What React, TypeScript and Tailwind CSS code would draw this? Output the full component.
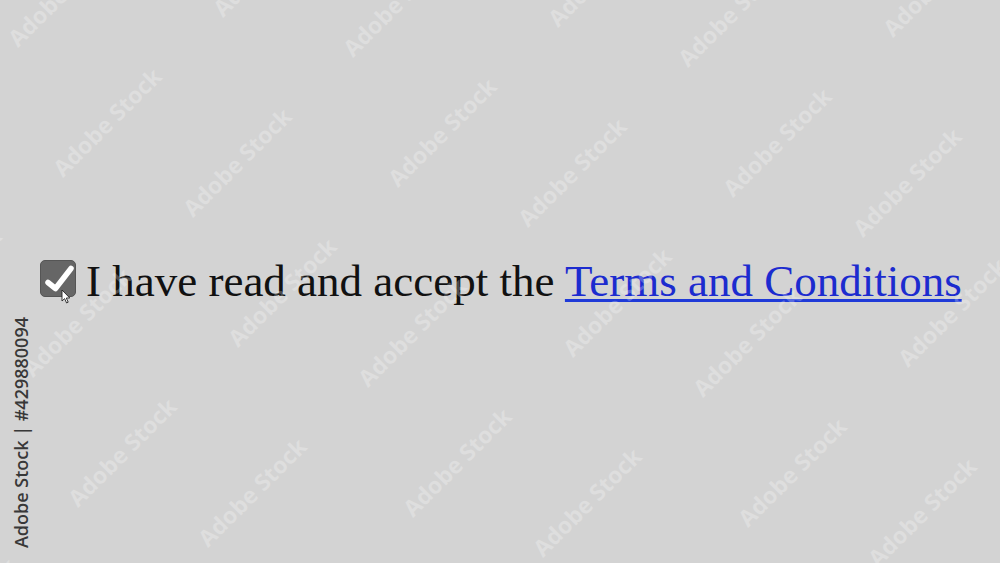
import React from "react";

function Watermarks() {
  const items: { x: number; y: number }[] = [];
  const base = { x: 107, y: 122 };
  for (let i = -3; i <= 4; i++) {
    for (let j = -2; j <= 4; j++) {
      for (const off of [
        { x: 0, y: 0 },
        { x: 130, y: 40 },
      ]) {
        const x = base.x + i * 335 + j * 175 + off.x;
        const y = base.y + i * 10 + j * 170 + off.y;
        if (x > -120 && x < 1120 && y > -120 && y < 680) items.push({ x, y });
      }
    }
  }
  return (
    <div className="pointer-events-none absolute inset-0 overflow-hidden">
      {items.map((p, k) => (
        <span
          key={k}
          className="absolute whitespace-nowrap text-[23px] font-bold text-white/25 [font-family:'Open_Sans',sans-serif]"
          style={{
            left: p.x,
            top: p.y,
            transform: "translate(-50%, -50%) rotate(-45deg)",
          }}
        >
          Adobe Stock
        </span>
      ))}
    </div>
  );
}

export default function App() {
  return (
    <div className="relative h-[563px] w-[1000px] overflow-hidden bg-[#d3d3d3]">
      <div className="flex items-start gap-[10px] pl-[40px] pt-[259px]">
        <div className="relative mt-[1px] h-[37px] w-[36px] shrink-0 rounded-[5px] border border-[#555] bg-[#666666]">
          <svg className="absolute inset-0" width="36" height="37" viewBox="0 0 36 37">
            <path
              d="M7 21.5 L14.5 27.5 L30 7.5"
              fill="none"
              stroke="#ffffff"
              strokeWidth="5.5"
              strokeLinecap="round"
              strokeLinejoin="round"
            />
          </svg>
          <svg className="absolute left-[20px] top-[28px]" width="10" height="15" viewBox="0 0 10 15">
            <path d="M1 1 L1 12 L3.6 9.6 L5.6 14 L7.2 13.2 L5.3 9 L8.8 9 Z" fill="#ffffff" stroke="#222" strokeWidth="0.9" strokeLinejoin="round" />
          </svg>
        </div>
        <p className="whitespace-nowrap text-[45px] leading-none text-[#111111] [font-family:'Liberation_Serif','Times_New_Roman',serif]">
          I have read and accept the{" "}
          <a
            href="#"
            className="text-[#1c2bcf] underline decoration-[#1f3ad8] decoration-[2.5px] underline-offset-[3px]"
          >
            Terms and Conditions
          </a>
        </p>
      </div>
      <Watermarks />
      <div className="absolute bottom-[15px] left-[12px] rotate-180 whitespace-nowrap text-[18px] font-semibold leading-none text-[#383838] [writing-mode:vertical-rl] [font-family:'Open_Sans',sans-serif]">
        Adobe Stock | #429880094
      </div>
    </div>
  );
}
